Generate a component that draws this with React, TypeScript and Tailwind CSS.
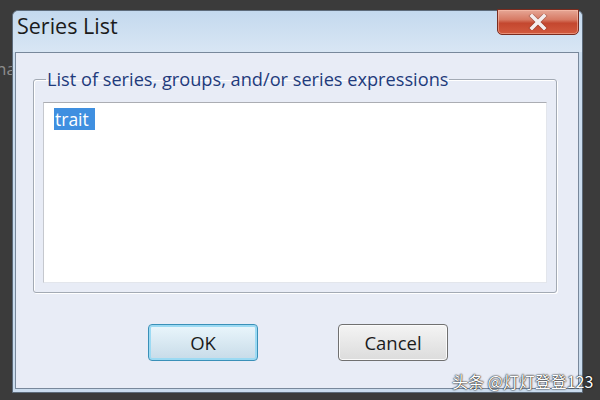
import React from 'react';

const App: React.FC = () => {
  return (
    <div className="relative w-[600px] h-[400px] overflow-hidden bg-[#3b3b3b] pl-[12px] pt-[10px] font-['Open_Sans','Noto_Sans',sans-serif]">
      {/* stray text behind the dialog */}
      <span className="absolute left-[-4px] top-[56px] text-[17px] text-[#8d8d8d]">na</span>

      {/* Dialog window */}
      <div className="relative flex flex-col w-[571px] h-[383px] bg-[#cadcee] border border-[#5d6b7a] rounded-t-[6px]">
        {/* Title bar */}
        <div className="flex items-start justify-between h-[41px] bg-gradient-to-b from-[#c4d9ee] to-[#d8e6f4] rounded-t-[6px]">
          <span className="pl-[4px] pt-[1px] text-[21.5px] leading-[28px] text-[#1b1b1b]">Series List</span>
          <div className="mr-[3px] mt-[-2px] flex items-center justify-center w-[82px] h-[26px] rounded-b-[5px] border border-[#7a2c1f] bg-[linear-gradient(to_bottom,#e6a796_0%,#d77a64_40%,#c4472f_55%,#d25a3e_100%)] shadow-[inset_0_0_0_1px_rgba(255,200,180,0.5)]">
            <svg width="20" height="16" viewBox="0 0 20 16">
              <path d="M4 2 L16 14 M16 2 L4 14" stroke="#5a1a10" strokeWidth="5" strokeLinecap="square" opacity="0.35" />
              <path d="M4 2 L16 14 M16 2 L4 14" stroke="#f4eeee" strokeWidth="3.6" strokeLinecap="square" />
            </svg>
          </div>
        </div>

        {/* Client area */}
        <div className="flex flex-col ml-[2px] mr-[3px] mb-[3px] flex-1 border border-[#78889b] bg-[#e8ecf6]">
          <fieldset className="ml-[17px] mr-[21px] mt-[14px] h-[226px] border border-[#a3aab4] rounded-[3px] shadow-[inset_1px_1px_0_#fff,1px_1px_0_#fff] px-[9px] pb-[9px] pt-0">
            <legend className="ml-[3px] px-[1px] text-[18.2px] leading-[24px] text-[#1f3b7c]">
              List of series, groups, and/or series expressions
            </legend>
            <div className="mt-[11px] h-[181px] bg-white border border-[#abadb3] border-r-[#e3e6ec] border-b-[#e3e6ec] border-l-[#c5c8ce] pl-[10px] pt-[5px]">
              <span className="inline-block bg-[#3f8fe0] text-white text-[17.5px] leading-[22px] pl-[1px] pr-[6px]">trait</span>
            </div>
          </fieldset>

          <div className="flex justify-center gap-[80px] mt-[31px] pl-[2px]">
            <button className="w-[110px] h-[37px] rounded-[4px] border border-[#3a90b8] bg-gradient-to-b from-[#eaf6fc] to-[#c7dbe8] shadow-[inset_0_0_0_2px_#9cdaf3] text-[18.5px] text-[#1b1b1b]">
              OK
            </button>
            <button className="w-[110px] h-[37px] rounded-[4px] border border-[#707070] bg-gradient-to-b from-[#f4f4f4] to-[#dcdcdc] shadow-[inset_0_0_0_1px_#fbfbfb] text-[18.5px] text-[#1b1b1b]">
              Cancel
            </button>
          </div>
        </div>
      </div>

      {/* watermark */}
      <span className="absolute left-[452px] top-[369px] whitespace-nowrap text-[16px] leading-[24px] text-white font-['Noto_Sans_CJK_SC',sans-serif] [text-shadow:0_0_2px_#000,0_0_1px_#000]">
        头条 @灯灯登登123
      </span>
    </div>
  );
};

export default App;
